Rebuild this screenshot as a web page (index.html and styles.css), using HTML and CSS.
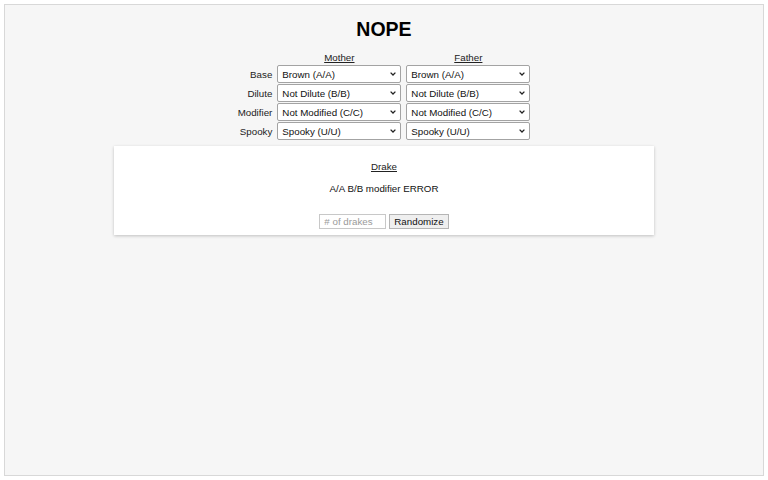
FILE: index.html
```html
<!DOCTYPE html>
<html>
<head>
<meta charset="utf-8">
<link rel="stylesheet" href="styles.css">
</head>
<body>
<div class="frame">
  <h1 class="title">NOPE</h1>
  <table class="genes">
    <thead>
      <tr><th></th><th class="parent">Mother</th><th class="parent">Father</th></tr>
    </thead>
    <tbody>
      <tr>
        <td class="label">Base</td>
        <td><select class="sel"><option>Brown (A/A)</option></select></td>
        <td><select class="sel"><option>Brown (A/A)</option></select></td>
      </tr>
      <tr>
        <td class="label">Dilute</td>
        <td><select class="sel"><option>Not Dilute (B/B)</option></select></td>
        <td><select class="sel"><option>Not Dilute (B/B)</option></select></td>
      </tr>
      <tr>
        <td class="label">Modifier</td>
        <td><select class="sel"><option>Not Modified (C/C)</option></select></td>
        <td><select class="sel"><option>Not Modified (C/C)</option></select></td>
      </tr>
      <tr>
        <td class="label">Spooky</td>
        <td><select class="sel"><option>Spooky (U/U)</option></select></td>
        <td><select class="sel"><option>Spooky (U/U)</option></select></td>
      </tr>
    </tbody>
  </table>
  <div class="card">
    <div class="card-title">Drake</div>
    <div class="result">A/A B/B modifier ERROR</div>
    <div class="controls">
      <input class="count" type="text" placeholder="# of drakes"><button class="btn">Randomize</button>
    </div>
  </div>
</div>
</body>
</html>
```
FILE: styles.css
```css
html, body {
  margin: 0;
  padding: 0;
  background: #ffffff;
}
body {
  padding: 4px;
  font-family: "Liberation Sans", Arial, sans-serif;
  font-size: 9.75px;
  color: #111;
}
.frame {
  box-sizing: border-box;
  height: 472px;
  border: 1px solid #d8d8d8;
  background: #f6f6f6;
  padding-top: 13px;
}
.title {
  margin: 0;
  text-align: center;
  font-size: 19.5px;
  line-height: 23px;
  font-weight: bold;
  color: #000;
}
.genes {
  margin: 10px auto 0;
  border-collapse: separate;
  border-spacing: 5px 1px;
}
.genes th, .genes td {
  padding: 0;
}
.parent {
  font-weight: normal;
  text-decoration: underline;
  text-align: center;
  font-size: 9.75px;
  line-height: 12px;
  height: 12px;
  color: #222;
}
.label {
  text-align: right;
  color: #222;
}
.sel {
  -webkit-appearance: none;
  appearance: none;
  box-sizing: border-box;
  width: 124px;
  height: 18px;
  margin: 0;
  font-family: "Liberation Sans", Arial, sans-serif;
  font-size: 9.75px;
  color: #111;
  background: #fff url("data:image/svg+xml;utf8,<svg xmlns='http://www.w3.org/2000/svg' width='6' height='4' viewBox='0 0 6 4'><path d='M0.6 0.6 L3 3 L5.4 0.6' fill='none' stroke='%23222' stroke-width='1.3'/></svg>") no-repeat right 4px center;
  border: 1px solid #a3a3a3;
  border-radius: 2px;
  padding: 0 14px 0 4px;
  display: block;
}
.card {
  width: 540px;
  margin: 5px auto 0;
  background: #fff;
  box-shadow: 0 1px 3px rgba(0,0,0,0.22);
  padding: 15px 0 6px;
  text-align: center;
}
.card-title {
  text-decoration: underline;
  line-height: 12px;
  color: #222;
}
.result {
  margin-top: 10px;
  line-height: 12px;
  color: #111;
}
.controls {
  margin-top: 19px;
  display: flex;
  justify-content: center;
  align-items: center;
  gap: 3px;
}
.count {
  box-sizing: border-box;
  width: 67px;
  height: 15px;
  margin: 0;
  padding: 0 4px;
  border: 1px solid #c8c8c8;
  font-family: "Liberation Sans", Arial, sans-serif;
  font-size: 9.75px;
  background: #fff;
}
.count::placeholder {
  color: #9a9a9a;
}
.btn {
  box-sizing: border-box;
  height: 15px;
  margin: 0;
  padding: 0 4px;
  font-family: "Liberation Sans", Arial, sans-serif;
  font-size: 9.75px;
  line-height: 13px;
  color: #111;
  background: #efefef;
  border: 1px solid #b5b5b5;
  border-radius: 0;
}
```
